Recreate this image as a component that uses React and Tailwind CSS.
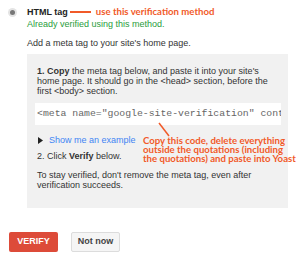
export default function App() {
  return (
    <div className="relative h-[263px] w-[300px] overflow-hidden bg-white font-['Liberation_Sans',Arial,sans-serif] text-[9px] text-[#333]">
      {/* method header */}
      <div className="mt-[6px] flex h-[12px] items-center leading-[12px]">
        <span className="ml-[8px] flex h-[9px] w-[9px] items-center justify-center rounded-full bg-[#e4e4e4]">
          <span className="h-[5px] w-[5px] rounded-full bg-[#777]" />
        </span>
        <span className="ml-[10px] font-bold text-[#222]">HTML tag</span>
        <span className="ml-[2px] h-[2px] w-[21px] bg-[#f15a29]" />
        <span className="ml-[5px] font-['Lato',sans-serif] text-[9.6px] font-bold text-[#f15a29]">
          use this verification method
        </span>
      </div>

      <div className="ml-[27px] w-[261px]">
        <p className="leading-[12px] text-[#2a9d3c]">Already verified using this method.</p>
        <p className="mt-[7px] leading-[12px]">Add a meta tag to your site's home page.</p>

        <div className="mt-[5px] bg-[#f1f1f1] pb-[18px] pl-[8px] pr-[7px] pt-[12px]">
          <p className="pl-[2px] leading-[10px]">
            <b>1. Copy</b> the meta tag below, and paste it into your site's home page. It should go in
            the &lt;head&gt; section, before the first &lt;body&gt; section.
          </p>
          <div className="mt-[7px] flex h-[22px] items-center overflow-hidden whitespace-nowrap bg-white pl-[2px] font-['Liberation_Mono',monospace] text-[9.8px] text-[#666]">
            &lt;meta name="google-site-verification" content="xxxxxxxx" /&gt;
          </div>
          <div className="mt-[10px] flex h-[10px] items-center pl-[3px] leading-[10px]">
            <svg width="5" height="7" viewBox="0 0 5 7" className="text-[#222]">
              <path d="M0 0 L5 3.5 L0 7 Z" fill="currentColor" />
            </svg>
            <span className="ml-[6px] text-[#4285f4]">Show me an example</span>
          </div>
          <p className="mt-[6px] pl-[2px] leading-[10px]">
            2. Click <b>Verify</b> below.
          </p>
          <p className="mt-[9px] pl-[2px] leading-[10px]">
            To stay verified, don't remove the meta tag, even after verification succeeds.
          </p>
        </div>
      </div>

      <div className="ml-[9px] mt-[24px] flex gap-[13px]">
        <button className="h-[20px] w-[49px] rounded-[2px] bg-[#dd4b39] text-[9px] font-bold text-white">
          VERIFY
        </button>
        <button className="h-[20px] w-[49px] rounded-[2px] border border-[#dcdcdc] bg-[#f5f5f5] text-[9px] font-bold text-[#444]">
          Not now
        </button>
      </div>

      {/* annotation overlay */}
      <svg className="absolute left-0 top-0" width="300" height="263">
        <line x1="159" y1="123" x2="169" y2="136" stroke="#f15a29" strokeWidth="1.5" />
      </svg>
      <div className="absolute left-[143px] top-[136px] font-['Lato',sans-serif] text-[9.6px] font-bold leading-[9px] text-[#f15a29]">
        <div>Copy this code, delete everything</div>
        <div>outside the quotations (including</div>
        <div>the quotations) and paste into Yoast</div>
      </div>
    </div>
  );
}
